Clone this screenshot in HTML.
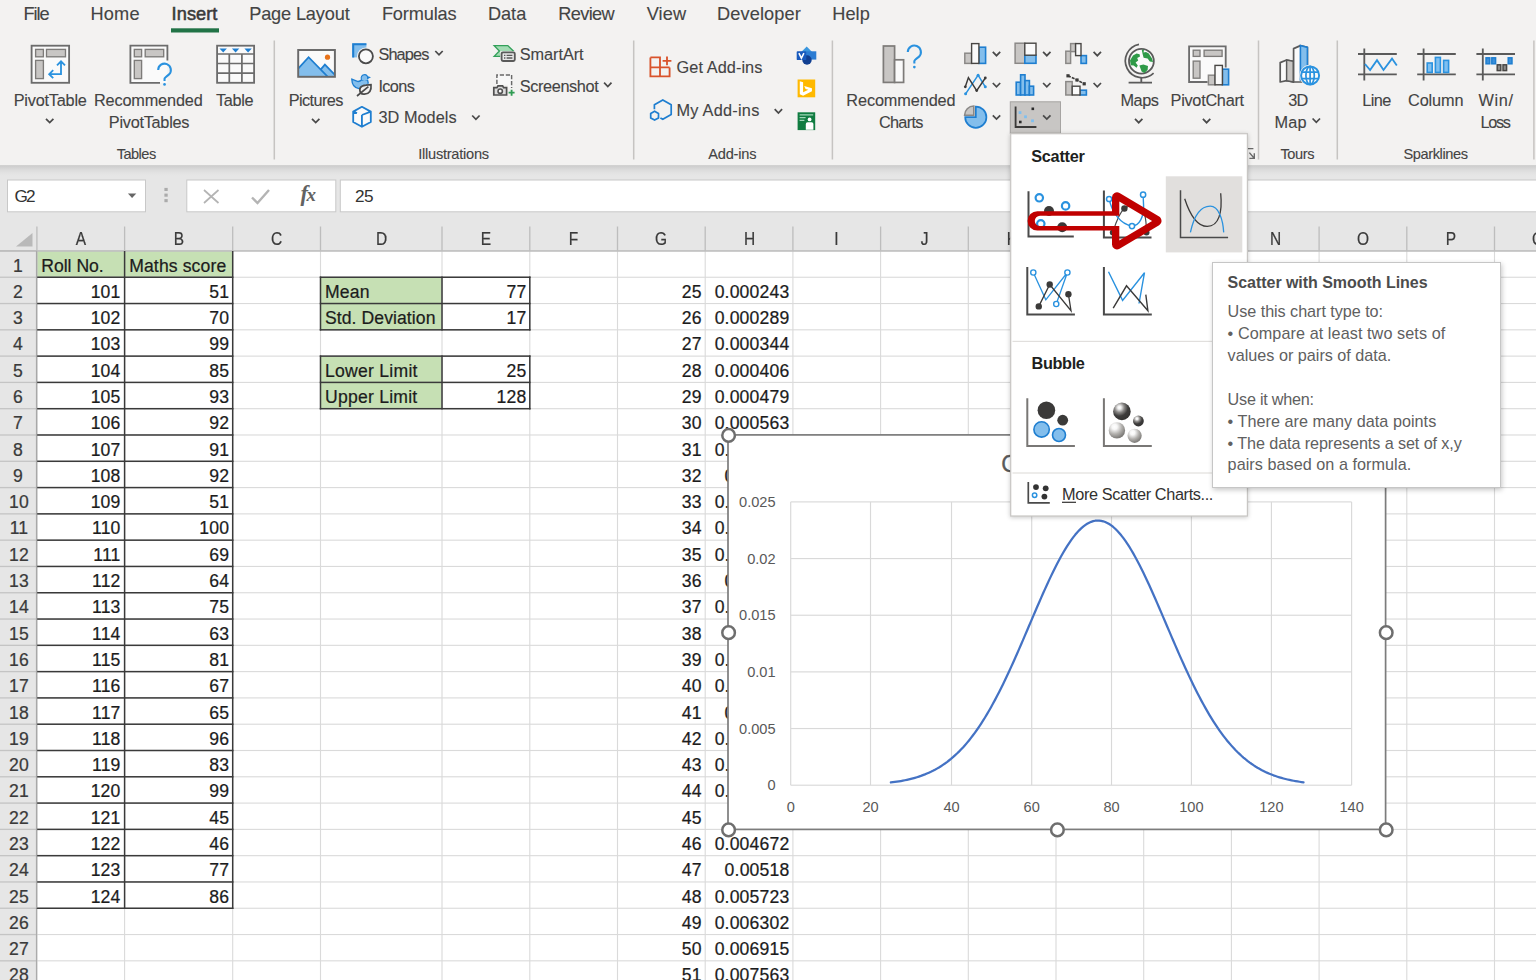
<!DOCTYPE html>
<html lang="en"><head><meta charset="utf-8"><title>Excel - Insert Scatter with Smooth Lines</title>
<style>
html,body{margin:0;padding:0;}
body{width:1536px;height:980px;overflow:hidden;position:relative;background:#e6e6e6;font-family:"Liberation Sans",sans-serif;}
#ribbon{position:absolute;left:0;top:0;width:1536px;height:165px;background:#f3f2f1;}
#rsh{position:absolute;left:0;top:165px;width:1536px;height:11px;background:linear-gradient(#d3d3d2 0%,#cfcfcf 12%,#d6d6d6 30%,#dddddd 50%,#e3e3e3 75%,#e6e6e6 100%);}
#fbar,#grid,#chart,#dd,#tip{position:absolute;left:0;top:0;width:1536px;height:980px;}
svg{position:absolute;left:0;top:0;display:block;}
.t{position:absolute;white-space:pre;line-height:1;}
#grid .t{-webkit-text-stroke:0.22px;}
#ribbon .t{-webkit-text-stroke:0.12px;}
.fx{font-family:"Liberation Serif",serif;font-style:italic;}
.tip{position:absolute;background:#fff;border:1px solid #c6c6c6;box-shadow:1px 2px 5px rgba(0,0,0,.22);box-sizing:border-box;}
#dd>svg{filter:drop-shadow(0.5px 1.5px 2px rgba(0,0,0,.22));}
</style></head>
<body>
<div id="ribbon">
<svg width="1536" height="170" viewBox="0 0 1536 170"><rect x="171" y="28.3" width="48" height="4.2" fill="#217346"/><rect x="273.55" y="40.5" width="1.5" height="119" fill="#c6c4c2"/><rect x="632.95" y="40.5" width="1.5" height="119" fill="#c6c4c2"/><rect x="831.65" y="40.5" width="1.5" height="119" fill="#c6c4c2"/><rect x="1257.75" y="40.5" width="1.5" height="119" fill="#c6c4c2"/><rect x="1336.55" y="40.5" width="1.5" height="119" fill="#c6c4c2"/><rect x="1533.15" y="40.5" width="1.5" height="119" fill="#c6c4c2"/><path d="M46 118.8 L49.7 122.6 L53.4 118.8" fill="none" stroke="#4a4a4a" stroke-width="1.75"/><path d="M312 118.8 L315.7 122.6 L319.4 118.8" fill="none" stroke="#4a4a4a" stroke-width="1.75"/><path d="M435.3 51 L439 54.8 L442.7 51" fill="none" stroke="#4a4a4a" stroke-width="1.75"/><path d="M472.2 115.5 L475.9 119.3 L479.6 115.5" fill="none" stroke="#4a4a4a" stroke-width="1.75"/><path d="M604.1 82.7 L607.8 86.5 L611.5 82.7" fill="none" stroke="#4a4a4a" stroke-width="1.75"/><path d="M774.7 109.2 L778.4 113 L782.1 109.2" fill="none" stroke="#4a4a4a" stroke-width="1.75"/><path d="M992.8 51.9 L996.5 55.7 L1000.2 51.9" fill="none" stroke="#4a4a4a" stroke-width="1.75"/><path d="M992.8 83 L996.5 86.8 L1000.2 83" fill="none" stroke="#4a4a4a" stroke-width="1.75"/><path d="M992.8 115.3 L996.5 119.1 L1000.2 115.3" fill="none" stroke="#4a4a4a" stroke-width="1.75"/><path d="M1043.1 51.9 L1046.8 55.7 L1050.5 51.9" fill="none" stroke="#4a4a4a" stroke-width="1.75"/><path d="M1043.1 83 L1046.8 86.8 L1050.5 83" fill="none" stroke="#4a4a4a" stroke-width="1.75"/><path d="M1093.6 51.9 L1097.3 55.7 L1101 51.9" fill="none" stroke="#4a4a4a" stroke-width="1.75"/><path d="M1093.6 83 L1097.3 86.8 L1101 83" fill="none" stroke="#4a4a4a" stroke-width="1.75"/><path d="M1135 118.9 L1138.7 122.7 L1142.4 118.9" fill="none" stroke="#4a4a4a" stroke-width="1.75"/><path d="M1202.9 118.9 L1206.6 122.7 L1210.3 118.9" fill="none" stroke="#4a4a4a" stroke-width="1.75"/><path d="M1312.6 118.5 L1316.3 122.3 L1320 118.5" fill="none" stroke="#4a4a4a" stroke-width="1.75"/><rect x="1010.3" y="101.8" width="50.2" height="31.5" fill="#c8c6c4" stroke="#a6a4a2" stroke-width="1"/><path d="M1043.1 115.3 L1046.8 119.1 L1050.5 115.3" fill="none" stroke="#4a4a4a" stroke-width="1.75"/><rect x="31.6" y="45.7" width="37.5" height="37.1" fill="#fafafa" stroke="#6c6c6c" stroke-width="1.83"/><rect x="35.6" y="49.4" width="7.8" height="7.4" fill="#c8c6c4" stroke="#7d7b79" stroke-width="1.34"/><rect x="46.5" y="49.4" width="19" height="7.4" fill="#c8c6c4" stroke="#7d7b79" stroke-width="1.34"/><rect x="35.6" y="60.4" width="7.8" height="18.2" fill="#c8c6c4" stroke="#7d7b79" stroke-width="1.34"/><path d="M61 61.6 L61 74.2 L49.2 74.2 M57 65.4 L61 61.4 L65 65.4 M53.2 70.2 L49.2 74.2 L53.2 78.2" fill="none" stroke="#2a92df" stroke-width="1.83"/><rect x="130.4" y="45.7" width="37" height="37.1" fill="#fafafa"/><path d="M160 82.8 L130.4 82.8 L130.4 45.7 L167.4 45.7 L167.4 60.5" fill="none" stroke="#6c6c6c" stroke-width="1.83"/><rect x="134.3" y="49.4" width="7.3" height="7.4" fill="#c8c6c4" stroke="#7d7b79" stroke-width="1.34"/><rect x="145.2" y="49.4" width="18.5" height="7.4" fill="#c8c6c4" stroke="#7d7b79" stroke-width="1.34"/><rect x="134.3" y="60.4" width="7.3" height="18.2" fill="#c8c6c4" stroke="#7d7b79" stroke-width="1.34"/><path d="M158.2 69.94 A6.33 6.33 0 1 1 169.08 74.37 Q164.53 77.85 164.53 78.67 L164.53 80.93" fill="none" stroke="#2a92df" stroke-width="2.07"/><circle cx="164.53" cy="84.43" r="1.33" fill="#2a92df"/><rect x="217.1" y="45.7" width="37" height="37.1" fill="#fafafa" stroke="#6c6c6c" stroke-width="1.83"/><path d="M217 54 L254 54 M217 63.5 L254 63.5 M217 73.2 L254 73.2 M229.3 54 L229.3 82.8 M241.9 54 L241.9 82.8" fill="none" stroke="#6c6c6c" stroke-width="1.71"/><path d="M219.5 48.5 L226.9 48.5 L223.2 52.4 Z" fill="#1e7ed0"/><path d="M231.9 48.5 L239.3 48.5 L235.6 52.4 Z" fill="#1e7ed0"/><path d="M244.4 48.5 L251.8 48.5 L248.1 52.4 Z" fill="#1e7ed0"/><rect x="298.2" y="50" width="36.7" height="26.8" fill="#fafafa"/><path d="M298.2 68.6 L308.6 57.2 L320.8 69.4 L324.9 64.6 L334.9 74.8 L334.9 76.8 L298.2 76.8 Z" fill="#83beec"/><path d="M298.2 68.6 L308.6 57.2 L327.6 76.6 M320.6 69.6 L324.9 64.6 L334.9 74.8" fill="none" stroke="#1e7ed0" stroke-width="1.71"/><rect x="298.2" y="50" width="36.7" height="26.8" fill="none" stroke="#696969" stroke-width="1.95"/><circle cx="327.5" cy="57.2" r="2.6" fill="#e8731a"/><rect x="352.4" y="43.4" width="14" height="14" fill="#83beec"/><path d="M353.2 57.4 L353.2 44.2 L366.4 44.2" fill="none" stroke="#1e7ed0" stroke-width="2.07"/><circle cx="365.9" cy="56.3" r="8.9" fill="#f3f2f1"/><circle cx="365.9" cy="56.3" r="7" fill="#fafafa" stroke="#4a4a4a" stroke-width="1.83"/><path d="M351.8 79.2 L357.4 81.4 Q359.8 81.8 361.6 79.8 L367.6 80.2 Q369.6 85.6 364.6 88.6 L359 88.6 Q352 87.6 351.8 79.2 Z" fill="#83beec" stroke="#1e7ed0" stroke-width="1.34"/><circle cx="364.6" cy="77.6" r="3.3" fill="#83beec"/><path d="M361.6 79.6 A3.3 3.3 0 1 1 367.6 79" fill="none" stroke="#1e7ed0" stroke-width="1.1"/><path d="M367.2 76 L371 77.3 L367.4 79.2 Z" fill="#1e7ed0"/><path d="M358.2 95.6 L369.8 85.2" fill="none" stroke="#f3f2f1" stroke-width="4.39"/><path d="M360.6 93.2 Q357.6 86 366 85.2 L371 84.6 Q372 93.4 364.4 94.2 Q362 94.4 360.6 93.2 Z" fill="#f3f2f1" stroke="#4a4a4a" stroke-width="1.71"/><path d="M357 96 L368.4 86.6" fill="none" stroke="#4a4a4a" stroke-width="1.71"/><path d="M361.9 106.8 L370.8 111.6 L370.8 122 L361.9 126.8 L353.2 122 L353.2 111.6 Z M353.2 111.6 L357 113.2 M361.9 115 L370.8 111.6 M361.9 115 L361.9 126.8" fill="#fafafa" stroke="#1e7ed0" stroke-width="1.83" stroke-linejoin="round"/><path d="M494.2 45.6 L507.8 45.6 L513.4 51 L507.8 56.4 L494.2 56.4 L499.4 51 Z" fill="#a3dcb4" stroke="#33a05a" stroke-width="1.34"/><rect x="500.2" y="51.2" width="16" height="10.8" fill="#f3f2f1"/><rect x="501.6" y="52.4" width="13.2" height="8.6" rx="1.4" fill="#e8e8e8" stroke="#5a5a5a" stroke-width="1.83"/><path d="M504 55.3 L505.4 55.3 M506.6 55.3 L512.4 55.3 M504 58 L505.4 58 M506.6 58 L512.4 58" fill="none" stroke="#5a5a5a" stroke-width="1.34"/><rect x="496.9" y="74.9" width="14.7" height="13.1" fill="#f8f8f8"/><path d="M496.9 84 L496.9 74.9 L511.6 74.9 L511.6 88" fill="none" stroke="#686868" stroke-width="1.46" stroke-dasharray="4.2 1.8"/><rect x="492.6" y="84.6" width="15.6" height="11.8" fill="#f3f2f1"/><path d="M493.8 87.6 L497 87.6 L498 85.9 L502.6 85.9 L503.6 87.6 L506.6 87.6 L506.6 95 L493.8 95 Z" fill="#dcdcdc" stroke="#505050" stroke-width="1.71"/><circle cx="500.2" cy="91.2" r="2.2" fill="#fafafa" stroke="#505050" stroke-width="1.59"/><path d="M508.6 92.7 L514.6 92.7 M511.6 89.7 L511.6 95.7" fill="none" stroke="#2f9c53" stroke-width="1.83"/><path d="M650.4 57.4 L660 57.4 L660 76.4 M650.4 67.4 L669.6 67.4 M650.4 57.4 L650.4 76.4 L669.6 76.4 L669.6 67.4" fill="none" stroke="#d9532c" stroke-width="1.83"/><path d="M662.6 60.8 L671.4 60.8 M667 56.4 L667 65.2" fill="none" stroke="#d9532c" stroke-width="1.83"/><path d="M654.4 109.2 L654.4 104.75 L662.8 99.9 L671.2 104.75 L671.2 114.45 L662.8 119.3 L660.4 117.9" fill="none" stroke="#1e7ed0" stroke-width="1.71" stroke-linejoin="round"/><path d="M654.6 111.2 L658.5 113.4 L658.5 117.9 L654.6 120.1 L650.7 117.9 L650.7 113.4 Z" fill="#f3f2f1" stroke="#1e7ed0" stroke-width="1.71" stroke-linejoin="round"/><path d="M806.7 46.6 L813.6 53.4 L806.7 60.2 L799.8 53.4 Z" fill="#3a96dd"/><rect x="806.2" y="51.3" width="10.1" height="8.3" fill="#2b7cd3"/><circle cx="807" cy="60" r="4.7" fill="#103f91"/><rect x="796.7" y="51.2" width="9.6" height="8.9" rx="0.9" fill="#185abd"/><path d="M798.9 53.2 L801.4 58.2 L803.9 53.2" fill="none" stroke="#fff" stroke-width="1.52"/><rect x="797.6" y="79.5" width="17.6" height="17.8" fill="#ffb900"/><g transform="translate(805.85 88.55) scale(1.38 1.2) translate(-806.8 -88.5)"><path d="M802.4 82.4 L804.8 83.2 L804.8 91.6 L808.6 89.6 L806.6 88.8 L805.6 86.4 L811.2 88.2 L811.2 90.8 L804.8 94.6 L802.4 93.2 Z" fill="#fff"/></g><rect x="797.6" y="112.3" width="17.6" height="17.8" fill="#107c41"/><path d="M799.6 114.8 L813.2 114.8 M799.6 117.6 L805.6 117.6 M799.6 120.4 L804.4 120.4" fill="none" stroke="#9fd5b7" stroke-width="1.34"/><circle cx="809.6" cy="119.4" r="1.9" fill="#fff"/><path d="M805.8 129.8 L805.8 124 Q805.8 122.2 807.6 122.2 L811.6 122.2 Q813.4 122.2 813.4 124 L813.4 129.8 Z" fill="#fff"/><rect x="883.4" y="46" width="11.2" height="36.4" fill="#c8c6c4" stroke="#7d7b79" stroke-width="1.71"/><rect x="894.6" y="59.8" width="9" height="22.6" fill="#fafafa" stroke="#7d7b79" stroke-width="1.71"/><path d="M907.8 52.08 A6.55 6.55 0 1 1 919.07 56.67 Q914.35 60.27 914.35 61.11 L914.35 63.45" fill="none" stroke="#2a92df" stroke-width="2.07"/><circle cx="914.35" cy="67.08" r="1.33" fill="#2a92df"/><rect x="964.8" y="53.2" width="6.8" height="10.2" fill="#c8c6c4" stroke="#8a8886" stroke-width="1.46"/><rect x="978.9" y="47.2" width="6.7" height="16.2" fill="#83beec" stroke="#1e7ed0" stroke-width="1.59"/><rect x="971.6" y="43.6" width="7.3" height="19.8" fill="#fafafa" stroke="#484644" stroke-width="1.4"/><path d="M965.6 93.8 L978.1 75.2 L985.3 86.8" fill="none" stroke="#2a92df" stroke-width="1.52"/><path d="M965.3 86.8 L968.4 77.6 L976.7 90.6 L985.3 78" fill="none" stroke="#3b3a39" stroke-width="1.46"/><circle cx="965.6" cy="93.8" r="1.5" fill="#2a92df"/><circle cx="978.1" cy="75.2" r="1.5" fill="#2a92df"/><circle cx="985.3" cy="86.8" r="1.5" fill="#2a92df"/><circle cx="965.3" cy="86.8" r="1.4" fill="#3b3a39"/><circle cx="976.7" cy="90.6" r="1.4" fill="#3b3a39"/><circle cx="985.3" cy="78" r="1.4" fill="#3b3a39"/><path d="M975.8 117.2 L975.8 106.6 A10.6 10.6 0 1 1 965.2 117.2 Z" fill="#83beec" stroke="#1e7ed0" stroke-width="1.71"/><path d="M973.8 115.2 L964.6 115.2 A9.2 9.2 0 0 1 973.8 106 Z" fill="#c8c6c4" stroke="#8a8886" stroke-width="1.59"/><rect x="1015.1" y="43.2" width="9.7" height="20.1" fill="#c8c6c4" stroke="#8a8886" stroke-width="1.46"/><rect x="1024.8" y="55.2" width="11.2" height="8.1" fill="#83beec" stroke="#1e7ed0" stroke-width="1.59"/><rect x="1024.8" y="43.2" width="11.2" height="12" fill="#fafafa" stroke="#484644" stroke-width="1.4"/><rect x="1016.2" y="82.2" width="4.4" height="12.8" fill="#83beec" stroke="#1e7ed0" stroke-width="1.59"/><rect x="1020.6" y="74.8" width="4.4" height="20.2" fill="#83beec" stroke="#1e7ed0" stroke-width="1.59"/><rect x="1025" y="80.6" width="4.4" height="14.4" fill="#83beec" stroke="#1e7ed0" stroke-width="1.59"/><rect x="1029.4" y="86.2" width="4.2" height="8.8" fill="#83beec" stroke="#1e7ed0" stroke-width="1.59"/><rect x="1065.8" y="51.2" width="4.8" height="12.2" fill="#c8c6c4" stroke="#8a8886" stroke-width="1.46"/><rect x="1070.6" y="43.6" width="5" height="8" fill="#c8c6c4" stroke="#8a8886" stroke-width="1.46"/><rect x="1081" y="55.6" width="5.4" height="7.8" fill="#83beec" stroke="#1e7ed0" stroke-width="1.59"/><rect x="1075.6" y="43.6" width="5.4" height="12" fill="#fafafa" stroke="#484644" stroke-width="1.4"/><rect x="1065.8" y="81.6" width="6.4" height="13.4" fill="#c8c6c4" stroke="#8a8886" stroke-width="1.46"/><rect x="1080" y="90.2" width="6.4" height="4.8" fill="#83beec" stroke="#1e7ed0" stroke-width="1.59"/><rect x="1072.2" y="86.2" width="7.8" height="8.8" fill="#fafafa" stroke="#484644" stroke-width="1.4"/><path d="M1068 75.8 L1077 80 L1084.2 83.8" fill="none" stroke="#3b3a39" stroke-width="1.59" stroke-dasharray="3 1.2"/><rect x="1066.4" y="74.2" width="3.2" height="3.2" fill="#3b3a39"/><rect x="1075.4" y="78.4" width="3.2" height="3.2" fill="#3b3a39"/><rect x="1082.6" y="82.2" width="3.2" height="3.2" fill="#3b3a39"/><path d="M1015.6 106.4 L1015.6 127 L1036.4 127" fill="none" stroke="#3b3a39" stroke-width="1.83"/><rect x="1031.5" y="107.5" width="2.6" height="2.6" fill="#2b2b2b"/><rect x="1019" y="120.7" width="2.6" height="2.6" fill="#2b2b2b"/><rect x="1018.6" y="111.2" width="2.8" height="2.8" fill="#7fbff0"/><rect x="1024.1" y="115.4" width="2.8" height="2.8" fill="#7fbff0"/><rect x="1031.1" y="119.4" width="2.8" height="2.8" fill="#7fbff0"/><path d="M1139 44.4 A16.8 16.8 0 1 0 1153.6 73.2" fill="none" stroke="#5a5a5a" stroke-width="1.71"/><circle cx="1141.4" cy="61.2" r="12.4" fill="#fafafa" stroke="#5a5a5a" stroke-width="1.83"/><path d="M1133 55.6 L1136.6 53.6 L1139.6 54.2 L1140 56.6 L1137.2 58 L1138.2 60.6 L1135.6 62.4 L1137.8 65.4 L1136.6 67.8 L1133.6 65.6 L1130.8 65.2 L1130 60.4 Z" fill="#2f9a48"/><path d="M1141.8 50 L1144 49.4 L1143.6 52.6 L1146 52 L1148.8 53.4 L1152 58.4 L1153 62 L1149.8 61.4 L1147.6 58.4 L1143.6 57.8 L1142.6 54 Z" fill="#2f9a48"/><path d="M1139.4 65.6 L1143.4 64.6 L1148 66 L1147.6 70 L1144.4 73 L1141.6 71.4 Z" fill="#2f9a48"/><path d="M1141.3 77.6 L1141.3 82.4 M1128.6 82.6 L1152 82.6" fill="none" stroke="#5a5a5a" stroke-width="1.83"/><rect x="1189.1" y="46.4" width="36.6" height="35.6" fill="#fafafa"/><path d="M1207.6 82 L1189.1 82 L1189.1 46.4 L1225.7 46.4 L1225.7 67.4" fill="none" stroke="#6c6c6c" stroke-width="1.83"/><rect x="1193.2" y="50.2" width="6.8" height="6.2" fill="#c8c6c4" stroke="#7d7b79" stroke-width="1.34"/><rect x="1204.1" y="50.2" width="18" height="6.2" fill="#c8c6c4" stroke="#7d7b79" stroke-width="1.34"/><rect x="1193.2" y="61.1" width="6.8" height="17.1" fill="#c8c6c4" stroke="#7d7b79" stroke-width="1.34"/><rect x="1208.4" y="75.2" width="6.6" height="9.6" fill="#c8c6c4" stroke="#8a8886" stroke-width="1.46"/><rect x="1222.4" y="69.2" width="6.2" height="15.6" fill="#83beec" stroke="#1e7ed0" stroke-width="1.59"/><rect x="1215" y="65.4" width="7.4" height="19.4" fill="#fafafa" stroke="#484644" stroke-width="1.4"/><path d="M1280.2 62.6 L1286.6 60 L1293.4 61.4 L1293.4 82 L1286.6 80.6 L1280.2 82 Z" fill="#fafafa" stroke="#5a5a5a" stroke-width="1.71" stroke-linejoin="round"/><path d="M1286.6 60 L1293.4 61.4 L1293.4 82 L1286.6 80.6 Z" fill="#c8c6c4" stroke="#5a5a5a" stroke-width="1.46"/><path d="M1293.6 48.6 L1300.4 45.6 L1307.4 47.4 L1307.4 82 L1293.6 82 Z" fill="#fafafa" stroke="#5a5a5a" stroke-width="1.71" stroke-linejoin="round"/><path d="M1300.4 45.6 L1307.4 47.4 L1307.4 80 L1300.4 80 Z" fill="#83beec" stroke="#1e7ed0" stroke-width="1.59"/><circle cx="1310.1" cy="75.4" r="10.6" fill="#f3f2f1"/><circle cx="1310.1" cy="75.4" r="9" fill="#fafafa" stroke="#2a92df" stroke-width="1.95"/><ellipse cx="1310.1" cy="75.4" rx="4.2" ry="9" fill="none" stroke="#2a92df" stroke-width="1.71"/><path d="M1310.1 66.4 L1310.1 84.4 M1301.6 72.2 L1318.6 72.2 M1301.6 78.6 L1318.6 78.6" fill="none" stroke="#2a92df" stroke-width="1.71"/><path d="M1364.3 48.4 L1364.3 80.5 M1358 54 L1396.8 54 M1358 74.4 L1396.8 74.4" fill="none" stroke="#5a5a5a" stroke-width="1.83"/><path d="M1365 64 L1370.1 70 L1377 60.2 L1383.5 70 L1392 58.6 L1396.8 65.6" fill="none" stroke="#2a92df" stroke-width="1.83"/><path d="M1423.6 48.4 L1423.6 80.5 M1417.2 54 L1455.8 54 M1417.2 74.4 L1455.8 74.4" fill="none" stroke="#5a5a5a" stroke-width="1.83"/><rect x="1427.2" y="63" width="5" height="9.4" fill="#7fbff0" stroke="#2a92df" stroke-width="1.59"/><rect x="1435.4" y="57.4" width="5" height="15" fill="#7fbff0" stroke="#2a92df" stroke-width="1.59"/><rect x="1443.6" y="60.4" width="5" height="12" fill="#7fbff0" stroke="#2a92df" stroke-width="1.59"/><path d="M1482.8 48.4 L1482.8 80.5 M1476.4 54 L1515 54 M1476.4 74.4 L1515 74.4" fill="none" stroke="#5a5a5a" stroke-width="1.83"/><rect x="1486" y="57.8" width="3.8" height="6" fill="#3b8fd9" stroke="#1e7ed0" stroke-width="1.46"/><rect x="1491.8" y="57.8" width="3.8" height="6" fill="#3b8fd9" stroke="#1e7ed0" stroke-width="1.46"/><rect x="1508.2" y="57.8" width="3.8" height="6" fill="#3b8fd9" stroke="#1e7ed0" stroke-width="1.46"/><rect x="1497.2" y="64.8" width="3.6" height="5.8" fill="#8a8886" stroke="#484644" stroke-width="1.46"/><rect x="1503" y="64.8" width="3.6" height="5.8" fill="#8a8886" stroke="#484644" stroke-width="1.46"/><path d="M1247.6 148.6 L1253.4 148.6 M1249.4 152.6 L1254 158 M1254.3 153.2 L1254.3 158.4 L1249.4 158.4" fill="none" stroke="#6a6a6a" stroke-width="1.4"/></svg>
<span class="t" style="left:23.4px;top:5px;font-size:18.2px;letter-spacing:-1.01px;color:#444444;">File</span><span class="t" style="left:90.4px;top:5px;font-size:18.2px;letter-spacing:0.22px;color:#444444;">Home</span><span class="t" style="left:249.2px;top:5px;font-size:18.2px;letter-spacing:-0.16px;color:#444444;">Page Layout</span><span class="t" style="left:381.9px;top:5px;font-size:18.2px;letter-spacing:-0.15px;color:#444444;">Formulas</span><span class="t" style="left:487.9px;top:5px;font-size:18.2px;letter-spacing:-0.01px;color:#444444;">Data</span><span class="t" style="left:558.3px;top:5px;font-size:18.2px;letter-spacing:-0.67px;color:#444444;">Review</span><span class="t" style="left:646.7px;top:5px;font-size:18.2px;letter-spacing:0.13px;color:#444444;">View</span><span class="t" style="left:717px;top:5px;font-size:18.2px;letter-spacing:0.12px;color:#444444;">Developer</span><span class="t" style="left:832.3px;top:5px;font-size:18.2px;letter-spacing:0.02px;color:#444444;">Help</span><span class="t" style="left:171.6px;top:5px;font-size:18.2px;letter-spacing:0.06px;color:#3a3a3a;-webkit-text-stroke:0.55px #3a3a3a;">Insert</span><span class="t" style="left:13.7px;top:92px;font-size:16.3px;letter-spacing:-0.21px;color:#444444;">PivotTable</span><span class="t" style="left:93.9px;top:92px;font-size:16.3px;letter-spacing:-0.15px;color:#444444;">Recommended</span><span class="t" style="left:108.8px;top:114px;font-size:16.3px;letter-spacing:-0.26px;color:#444444;">PivotTables</span><span class="t" style="left:216px;top:92px;font-size:16.3px;letter-spacing:-0.32px;color:#444444;">Table</span><span class="t" style="left:288.8px;top:92px;font-size:16.3px;letter-spacing:-0.6px;color:#444444;">Pictures</span><span class="t" style="left:378.4px;top:46px;font-size:16.3px;letter-spacing:-0.84px;color:#444444;">Shapes</span><span class="t" style="left:378.4px;top:78px;font-size:16.3px;letter-spacing:-0.59px;color:#444444;">Icons</span><span class="t" style="left:378.4px;top:109px;font-size:16.3px;letter-spacing:0.05px;color:#444444;">3D Models</span><span class="t" style="left:519.8px;top:46px;font-size:16.3px;letter-spacing:-0.06px;color:#444444;">SmartArt</span><span class="t" style="left:519.8px;top:78px;font-size:16.3px;letter-spacing:-0.38px;color:#444444;">Screenshot</span><span class="t" style="left:676.5px;top:59px;font-size:16.3px;letter-spacing:0.08px;color:#444444;">Get Add-ins</span><span class="t" style="left:676.5px;top:102px;font-size:16.3px;letter-spacing:0.25px;color:#444444;">My Add-ins</span><span class="t" style="left:846.3px;top:92px;font-size:16.3px;letter-spacing:-0.11px;color:#444444;">Recommended</span><span class="t" style="left:878.9px;top:114px;font-size:16.3px;letter-spacing:-0.7px;color:#444444;">Charts</span><span class="t" style="left:1120.5px;top:92px;font-size:16.3px;letter-spacing:-0.49px;color:#444444;">Maps</span><span class="t" style="left:1170.6px;top:92px;font-size:16.3px;letter-spacing:-0.28px;color:#444444;">PivotChart</span><span class="t" style="left:1288.3px;top:92px;font-size:16.3px;letter-spacing:-0.94px;color:#444444;">3D</span><span class="t" style="left:1274.6px;top:114px;font-size:16.3px;letter-spacing:0.15px;color:#444444;">Map</span><span class="t" style="left:1362.3px;top:92px;font-size:16.3px;letter-spacing:-0.57px;color:#444444;">Line</span><span class="t" style="left:1408px;top:92px;font-size:16.3px;letter-spacing:-0.13px;color:#444444;">Column</span><span class="t" style="left:1478.5px;top:92px;font-size:16.3px;letter-spacing:0.63px;color:#444444;">Win/</span><span class="t" style="left:1480.5px;top:114px;font-size:16.3px;letter-spacing:-1.31px;color:#444444;">Loss</span><span class="t" style="left:116.7px;top:147px;font-size:14.6px;letter-spacing:-0.54px;color:#444444;">Tables</span><span class="t" style="left:418.2px;top:147px;font-size:14.6px;letter-spacing:-0.24px;color:#444444;">Illustrations</span><span class="t" style="left:708.3px;top:147px;font-size:14.6px;letter-spacing:-0.22px;color:#444444;">Add-ins</span><span class="t" style="left:1280.5px;top:147px;font-size:14.6px;letter-spacing:-0.43px;color:#444444;">Tours</span><span class="t" style="left:1403.5px;top:147px;font-size:14.6px;letter-spacing:-0.41px;color:#444444;">Sparklines</span>
</div>
<div id="rsh"></div>
<div id="fbar"><svg width="1536" height="60" viewBox="0 166 1536 60" style="top:166px"><rect x="7.5" y="180" width="138" height="31.8" fill="#fff" stroke="#c8c8c8" stroke-width="1"/><rect x="186.8" y="180" width="149" height="31.8" fill="#fff" stroke="#c8c8c8" stroke-width="1"/><rect x="340.3" y="180" width="1210" height="31.8" fill="#fff" stroke="#c8c8c8" stroke-width="1"/><path d="M127.9 193.4 L136.3 193.4 L132.1 197.9 Z" fill="#666"/><rect x="164.4" y="187.9" width="3.3" height="3.1" fill="#ababab"/><rect x="164.4" y="193.6" width="3.3" height="3.1" fill="#ababab"/><rect x="164.4" y="199.1" width="3.3" height="3.1" fill="#ababab"/><path d="M204 190 L218.5 203 M218.5 190 L204 203" stroke="#b4b4b4" stroke-width="1.7" fill="none"/><path d="M252 197.5 L257.5 203 L269 190" stroke="#b4b4b4" stroke-width="2.4" fill="none"/></svg>
<span class="t" style="left:14.5px;top:188px;font-size:17.2px;letter-spacing:-1.94px;color:#333;">G2</span>
<span class="t" style="left:355px;top:188px;font-size:17.2px;letter-spacing:-0.53px;color:#333;">25</span>
<span class="t fx" style="left:300.6px;top:183.3px;font-size:22.5px;font-weight:bold;color:#626262">f<span style="font-size:19px;margin-left:-1.6px">x</span></span>
</div>
<div id="grid"><svg width="1536" height="980" viewBox="0 0 1536 980"><rect x="0" y="225.5" width="1536" height="25.44999999999999" fill="#e6e6e6"/><rect x="0" y="250.95" width="36.9" height="740" fill="#e6e6e6"/><rect x="36.9" y="250.95" width="1500" height="740" fill="#fff"/><rect x="36.9" y="250.95" width="195.8" height="26.29" fill="#c6e0b4"/><rect x="320.5" y="277.24" width="121.5" height="52.58" fill="#c6e0b4"/><rect x="320.5" y="356.12" width="121.5" height="52.58" fill="#c6e0b4"/><rect x="36.35" y="250.95" width="1.1" height="740" fill="#dadada"/><rect x="36.25" y="226.5" width="1.3" height="24.45" fill="#bdbdbd"/><rect x="124.05" y="250.95" width="1.1" height="740" fill="#dadada"/><rect x="123.95" y="226.5" width="1.3" height="24.45" fill="#bdbdbd"/><rect x="232.15" y="250.95" width="1.1" height="740" fill="#dadada"/><rect x="232.05" y="226.5" width="1.3" height="24.45" fill="#bdbdbd"/><rect x="319.95" y="250.95" width="1.1" height="740" fill="#dadada"/><rect x="319.85" y="226.5" width="1.3" height="24.45" fill="#bdbdbd"/><rect x="441.45" y="250.95" width="1.1" height="740" fill="#dadada"/><rect x="441.35" y="226.5" width="1.3" height="24.45" fill="#bdbdbd"/><rect x="529.25" y="250.95" width="1.1" height="740" fill="#dadada"/><rect x="529.15" y="226.5" width="1.3" height="24.45" fill="#bdbdbd"/><rect x="616.95" y="250.95" width="1.1" height="740" fill="#dadada"/><rect x="616.85" y="226.5" width="1.3" height="24.45" fill="#bdbdbd"/><rect x="704.65" y="250.95" width="1.1" height="740" fill="#dadada"/><rect x="704.55" y="226.5" width="1.3" height="24.45" fill="#bdbdbd"/><rect x="792.35" y="250.95" width="1.1" height="740" fill="#dadada"/><rect x="792.25" y="226.5" width="1.3" height="24.45" fill="#bdbdbd"/><rect x="880.05" y="250.95" width="1.1" height="740" fill="#dadada"/><rect x="879.95" y="226.5" width="1.3" height="24.45" fill="#bdbdbd"/><rect x="967.75" y="250.95" width="1.1" height="740" fill="#dadada"/><rect x="967.65" y="226.5" width="1.3" height="24.45" fill="#bdbdbd"/><rect x="1055.45" y="250.95" width="1.1" height="740" fill="#dadada"/><rect x="1055.35" y="226.5" width="1.3" height="24.45" fill="#bdbdbd"/><rect x="1143.15" y="250.95" width="1.1" height="740" fill="#dadada"/><rect x="1143.05" y="226.5" width="1.3" height="24.45" fill="#bdbdbd"/><rect x="1230.85" y="250.95" width="1.1" height="740" fill="#dadada"/><rect x="1230.75" y="226.5" width="1.3" height="24.45" fill="#bdbdbd"/><rect x="1318.55" y="250.95" width="1.1" height="740" fill="#dadada"/><rect x="1318.45" y="226.5" width="1.3" height="24.45" fill="#bdbdbd"/><rect x="1406.25" y="250.95" width="1.1" height="740" fill="#dadada"/><rect x="1406.15" y="226.5" width="1.3" height="24.45" fill="#bdbdbd"/><rect x="1493.95" y="250.95" width="1.1" height="740" fill="#dadada"/><rect x="1493.85" y="226.5" width="1.3" height="24.45" fill="#bdbdbd"/><rect x="1581.65" y="250.95" width="1.1" height="740" fill="#dadada"/><rect x="1581.55" y="226.5" width="1.3" height="24.45" fill="#bdbdbd"/><rect x="36.9" y="250.4" width="1500" height="1.1" fill="#dadada"/><rect x="0" y="250.3" width="36.9" height="1.3" fill="#c4c4c4"/><rect x="36.9" y="276.69" width="1500" height="1.1" fill="#dadada"/><rect x="0" y="276.59" width="36.9" height="1.3" fill="#c4c4c4"/><rect x="36.9" y="302.98" width="1500" height="1.1" fill="#dadada"/><rect x="0" y="302.88" width="36.9" height="1.3" fill="#c4c4c4"/><rect x="36.9" y="329.28" width="1500" height="1.1" fill="#dadada"/><rect x="0" y="329.18" width="36.9" height="1.3" fill="#c4c4c4"/><rect x="36.9" y="355.57" width="1500" height="1.1" fill="#dadada"/><rect x="0" y="355.47" width="36.9" height="1.3" fill="#c4c4c4"/><rect x="36.9" y="381.86" width="1500" height="1.1" fill="#dadada"/><rect x="0" y="381.76" width="36.9" height="1.3" fill="#c4c4c4"/><rect x="36.9" y="408.15" width="1500" height="1.1" fill="#dadada"/><rect x="0" y="408.05" width="36.9" height="1.3" fill="#c4c4c4"/><rect x="36.9" y="434.44" width="1500" height="1.1" fill="#dadada"/><rect x="0" y="434.34" width="36.9" height="1.3" fill="#c4c4c4"/><rect x="36.9" y="460.74" width="1500" height="1.1" fill="#dadada"/><rect x="0" y="460.64" width="36.9" height="1.3" fill="#c4c4c4"/><rect x="36.9" y="487.03" width="1500" height="1.1" fill="#dadada"/><rect x="0" y="486.93" width="36.9" height="1.3" fill="#c4c4c4"/><rect x="36.9" y="513.32" width="1500" height="1.1" fill="#dadada"/><rect x="0" y="513.22" width="36.9" height="1.3" fill="#c4c4c4"/><rect x="36.9" y="539.61" width="1500" height="1.1" fill="#dadada"/><rect x="0" y="539.51" width="36.9" height="1.3" fill="#c4c4c4"/><rect x="36.9" y="565.9" width="1500" height="1.1" fill="#dadada"/><rect x="0" y="565.8" width="36.9" height="1.3" fill="#c4c4c4"/><rect x="36.9" y="592.2" width="1500" height="1.1" fill="#dadada"/><rect x="0" y="592.1" width="36.9" height="1.3" fill="#c4c4c4"/><rect x="36.9" y="618.49" width="1500" height="1.1" fill="#dadada"/><rect x="0" y="618.39" width="36.9" height="1.3" fill="#c4c4c4"/><rect x="36.9" y="644.78" width="1500" height="1.1" fill="#dadada"/><rect x="0" y="644.68" width="36.9" height="1.3" fill="#c4c4c4"/><rect x="36.9" y="671.07" width="1500" height="1.1" fill="#dadada"/><rect x="0" y="670.97" width="36.9" height="1.3" fill="#c4c4c4"/><rect x="36.9" y="697.36" width="1500" height="1.1" fill="#dadada"/><rect x="0" y="697.26" width="36.9" height="1.3" fill="#c4c4c4"/><rect x="36.9" y="723.66" width="1500" height="1.1" fill="#dadada"/><rect x="0" y="723.56" width="36.9" height="1.3" fill="#c4c4c4"/><rect x="36.9" y="749.95" width="1500" height="1.1" fill="#dadada"/><rect x="0" y="749.85" width="36.9" height="1.3" fill="#c4c4c4"/><rect x="36.9" y="776.24" width="1500" height="1.1" fill="#dadada"/><rect x="0" y="776.14" width="36.9" height="1.3" fill="#c4c4c4"/><rect x="36.9" y="802.53" width="1500" height="1.1" fill="#dadada"/><rect x="0" y="802.43" width="36.9" height="1.3" fill="#c4c4c4"/><rect x="36.9" y="828.82" width="1500" height="1.1" fill="#dadada"/><rect x="0" y="828.72" width="36.9" height="1.3" fill="#c4c4c4"/><rect x="36.9" y="855.12" width="1500" height="1.1" fill="#dadada"/><rect x="0" y="855.02" width="36.9" height="1.3" fill="#c4c4c4"/><rect x="36.9" y="881.41" width="1500" height="1.1" fill="#dadada"/><rect x="0" y="881.31" width="36.9" height="1.3" fill="#c4c4c4"/><rect x="36.9" y="907.7" width="1500" height="1.1" fill="#dadada"/><rect x="0" y="907.6" width="36.9" height="1.3" fill="#c4c4c4"/><rect x="36.9" y="933.99" width="1500" height="1.1" fill="#dadada"/><rect x="0" y="933.89" width="36.9" height="1.3" fill="#c4c4c4"/><rect x="36.9" y="960.28" width="1500" height="1.1" fill="#dadada"/><rect x="0" y="960.18" width="36.9" height="1.3" fill="#c4c4c4"/><rect x="36.9" y="986.58" width="1500" height="1.1" fill="#dadada"/><rect x="0" y="986.48" width="36.9" height="1.3" fill="#c4c4c4"/><rect x="0" y="250.3" width="1536" height="1.3" fill="#b8b8b8"/><rect x="35.9" y="250.95" width="1.3" height="740" fill="#ababab"/><path d="M32.5 233 L32.5 246.5 L16 246.5 Z" fill="#b9b9b9"/><rect x="36.65" y="276.49" width="196.8" height="1.5" fill="#3a3a3a"/><rect x="36.65" y="302.78" width="196.8" height="1.5" fill="#3a3a3a"/><rect x="36.65" y="329.08" width="196.8" height="1.5" fill="#3a3a3a"/><rect x="36.65" y="355.37" width="196.8" height="1.5" fill="#3a3a3a"/><rect x="36.65" y="381.66" width="196.8" height="1.5" fill="#3a3a3a"/><rect x="36.65" y="407.95" width="196.8" height="1.5" fill="#3a3a3a"/><rect x="36.65" y="434.24" width="196.8" height="1.5" fill="#3a3a3a"/><rect x="36.65" y="460.54" width="196.8" height="1.5" fill="#3a3a3a"/><rect x="36.65" y="486.83" width="196.8" height="1.5" fill="#3a3a3a"/><rect x="36.65" y="513.12" width="196.8" height="1.5" fill="#3a3a3a"/><rect x="36.65" y="539.41" width="196.8" height="1.5" fill="#3a3a3a"/><rect x="36.65" y="565.7" width="196.8" height="1.5" fill="#3a3a3a"/><rect x="36.65" y="592" width="196.8" height="1.5" fill="#3a3a3a"/><rect x="36.65" y="618.29" width="196.8" height="1.5" fill="#3a3a3a"/><rect x="36.65" y="644.58" width="196.8" height="1.5" fill="#3a3a3a"/><rect x="36.65" y="670.87" width="196.8" height="1.5" fill="#3a3a3a"/><rect x="36.65" y="697.16" width="196.8" height="1.5" fill="#3a3a3a"/><rect x="36.65" y="723.46" width="196.8" height="1.5" fill="#3a3a3a"/><rect x="36.65" y="749.75" width="196.8" height="1.5" fill="#3a3a3a"/><rect x="36.65" y="776.04" width="196.8" height="1.5" fill="#3a3a3a"/><rect x="36.65" y="802.33" width="196.8" height="1.5" fill="#3a3a3a"/><rect x="36.65" y="828.62" width="196.8" height="1.5" fill="#3a3a3a"/><rect x="36.65" y="854.92" width="196.8" height="1.5" fill="#3a3a3a"/><rect x="36.65" y="881.21" width="196.8" height="1.5" fill="#3a3a3a"/><rect x="36.65" y="907.5" width="196.8" height="1.5" fill="#3a3a3a"/><rect x="123.85" y="251" width="1.5" height="658" fill="#3a3a3a"/><rect x="231.95" y="251" width="1.5" height="658" fill="#3a3a3a"/><rect x="36.1" y="251.75" width="1.1" height="656.5" fill="#a8a8a8"/><rect x="319.75" y="276.49" width="210.8" height="1.5" fill="#3a3a3a"/><rect x="319.75" y="302.78" width="210.8" height="1.5" fill="#3a3a3a"/><rect x="319.75" y="329.08" width="210.8" height="1.5" fill="#3a3a3a"/><rect x="319.75" y="276.49" width="1.5" height="54.08" fill="#3a3a3a"/><rect x="441.25" y="276.49" width="1.5" height="54.08" fill="#3a3a3a"/><rect x="529.05" y="276.49" width="1.5" height="54.08" fill="#3a3a3a"/><rect x="319.75" y="355.37" width="210.8" height="1.5" fill="#3a3a3a"/><rect x="319.75" y="381.66" width="210.8" height="1.5" fill="#3a3a3a"/><rect x="319.75" y="407.95" width="210.8" height="1.5" fill="#3a3a3a"/><rect x="319.75" y="355.37" width="1.5" height="54.08" fill="#3a3a3a"/><rect x="441.25" y="355.37" width="1.5" height="54.08" fill="#3a3a3a"/><rect x="529.05" y="355.37" width="1.5" height="54.08" fill="#3a3a3a"/></svg>
<span class="t" style="left:74.75px;top:230px;font-size:18px;color:#3a3a3a;transform:scaleX(.86);">A</span><span class="t" style="left:172.65px;top:230px;font-size:18px;color:#3a3a3a;transform:scaleX(.86);">B</span><span class="t" style="left:270.1px;top:230px;font-size:18px;color:#3a3a3a;transform:scaleX(.86);">C</span><span class="t" style="left:374.75px;top:230px;font-size:18px;color:#3a3a3a;transform:scaleX(.86);">D</span><span class="t" style="left:479.9px;top:230px;font-size:18px;color:#3a3a3a;transform:scaleX(.86);">E</span><span class="t" style="left:568.15px;top:230px;font-size:18px;color:#3a3a3a;transform:scaleX(.86);">F</span><span class="t" style="left:654.35px;top:230px;font-size:18px;color:#3a3a3a;transform:scaleX(.86);">G</span><span class="t" style="left:742.55px;top:230px;font-size:18px;color:#3a3a3a;transform:scaleX(.86);">H</span><span class="t" style="left:834.25px;top:230px;font-size:18px;color:#3a3a3a;transform:scaleX(.86);">I</span><span class="t" style="left:919.95px;top:230px;font-size:18px;color:#3a3a3a;transform:scaleX(.86);">J</span><span class="t" style="left:1006.15px;top:230px;font-size:18px;color:#3a3a3a;transform:scaleX(.86);">K</span><span class="t" style="left:1094.84px;top:230px;font-size:18px;color:#3a3a3a;transform:scaleX(.86);">L</span><span class="t" style="left:1180.05px;top:230px;font-size:18px;color:#3a3a3a;transform:scaleX(.86);">M</span><span class="t" style="left:1268.75px;top:230px;font-size:18px;color:#3a3a3a;transform:scaleX(.86);">N</span><span class="t" style="left:1355.95px;top:230px;font-size:18px;color:#3a3a3a;transform:scaleX(.86);">O</span><span class="t" style="left:1444.65px;top:230px;font-size:18px;color:#3a3a3a;transform:scaleX(.86);">P</span><span class="t" style="left:1531.35px;top:230px;font-size:18px;color:#3a3a3a;transform:scaleX(.86);">Q</span><span class="t" style="left:13.01px;top:258px;font-size:17.6px;color:#3a3a3a;">1</span><span class="t" style="left:13.01px;top:284px;font-size:17.6px;color:#3a3a3a;">2</span><span class="t" style="left:13.01px;top:310px;font-size:17.6px;color:#3a3a3a;">3</span><span class="t" style="left:13.01px;top:336px;font-size:17.6px;color:#3a3a3a;">4</span><span class="t" style="left:13.01px;top:363px;font-size:17.6px;color:#3a3a3a;">5</span><span class="t" style="left:13.01px;top:389px;font-size:17.6px;color:#3a3a3a;">6</span><span class="t" style="left:13.01px;top:415px;font-size:17.6px;color:#3a3a3a;">7</span><span class="t" style="left:13.01px;top:442px;font-size:17.6px;color:#3a3a3a;">8</span><span class="t" style="left:13.01px;top:468px;font-size:17.6px;color:#3a3a3a;">9</span><span class="t" style="left:9.11px;top:494px;font-size:17.6px;color:#3a3a3a;">10</span><span class="t" style="left:9.76px;top:520px;font-size:17.6px;color:#3a3a3a;">11</span><span class="t" style="left:9.11px;top:547px;font-size:17.6px;color:#3a3a3a;">12</span><span class="t" style="left:9.11px;top:573px;font-size:17.6px;color:#3a3a3a;">13</span><span class="t" style="left:9.11px;top:599px;font-size:17.6px;color:#3a3a3a;">14</span><span class="t" style="left:9.11px;top:626px;font-size:17.6px;color:#3a3a3a;">15</span><span class="t" style="left:9.11px;top:652px;font-size:17.6px;color:#3a3a3a;">16</span><span class="t" style="left:9.11px;top:678px;font-size:17.6px;color:#3a3a3a;">17</span><span class="t" style="left:9.11px;top:705px;font-size:17.6px;color:#3a3a3a;">18</span><span class="t" style="left:9.11px;top:731px;font-size:17.6px;color:#3a3a3a;">19</span><span class="t" style="left:9.11px;top:757px;font-size:17.6px;color:#3a3a3a;">20</span><span class="t" style="left:9.11px;top:783px;font-size:17.6px;color:#3a3a3a;">21</span><span class="t" style="left:9.11px;top:810px;font-size:17.6px;color:#3a3a3a;">22</span><span class="t" style="left:9.11px;top:836px;font-size:17.6px;color:#3a3a3a;">23</span><span class="t" style="left:9.11px;top:862px;font-size:17.6px;color:#3a3a3a;">24</span><span class="t" style="left:9.11px;top:889px;font-size:17.6px;color:#3a3a3a;">25</span><span class="t" style="left:9.11px;top:915px;font-size:17.6px;color:#3a3a3a;">26</span><span class="t" style="left:9.11px;top:941px;font-size:17.6px;color:#3a3a3a;">27</span><span class="t" style="left:9.11px;top:967px;font-size:17.6px;color:#3a3a3a;">28</span><span class="t" style="left:41.2px;top:258px;font-size:17.6px;letter-spacing:0px;color:#1c1c1c;">Roll No.</span><span class="t" style="left:129.2px;top:258px;font-size:17.6px;letter-spacing:0.12px;color:#1c1c1c;">Maths score</span><span class="t" style="left:90.67px;top:284px;font-size:17.6px;letter-spacing:0.18px;color:#1c1c1c;">101</span><span class="t" style="left:209.24px;top:284px;font-size:17.6px;letter-spacing:0.18px;color:#1c1c1c;">51</span><span class="t" style="left:90.67px;top:310px;font-size:17.6px;letter-spacing:0.18px;color:#1c1c1c;">102</span><span class="t" style="left:209.24px;top:310px;font-size:17.6px;letter-spacing:0.18px;color:#1c1c1c;">70</span><span class="t" style="left:90.67px;top:336px;font-size:17.6px;letter-spacing:0.18px;color:#1c1c1c;">103</span><span class="t" style="left:209.24px;top:336px;font-size:17.6px;letter-spacing:0.18px;color:#1c1c1c;">99</span><span class="t" style="left:90.67px;top:363px;font-size:17.6px;letter-spacing:0.18px;color:#1c1c1c;">104</span><span class="t" style="left:209.24px;top:363px;font-size:17.6px;letter-spacing:0.18px;color:#1c1c1c;">85</span><span class="t" style="left:90.67px;top:389px;font-size:17.6px;letter-spacing:0.18px;color:#1c1c1c;">105</span><span class="t" style="left:209.24px;top:389px;font-size:17.6px;letter-spacing:0.18px;color:#1c1c1c;">93</span><span class="t" style="left:90.67px;top:415px;font-size:17.6px;letter-spacing:0.18px;color:#1c1c1c;">106</span><span class="t" style="left:209.24px;top:415px;font-size:17.6px;letter-spacing:0.18px;color:#1c1c1c;">92</span><span class="t" style="left:90.67px;top:442px;font-size:17.6px;letter-spacing:0.18px;color:#1c1c1c;">107</span><span class="t" style="left:209.24px;top:442px;font-size:17.6px;letter-spacing:0.18px;color:#1c1c1c;">91</span><span class="t" style="left:90.67px;top:468px;font-size:17.6px;letter-spacing:0.18px;color:#1c1c1c;">108</span><span class="t" style="left:209.24px;top:468px;font-size:17.6px;letter-spacing:0.18px;color:#1c1c1c;">92</span><span class="t" style="left:90.67px;top:494px;font-size:17.6px;letter-spacing:0.18px;color:#1c1c1c;">109</span><span class="t" style="left:209.24px;top:494px;font-size:17.6px;letter-spacing:0.18px;color:#1c1c1c;">51</span><span class="t" style="left:91.98px;top:520px;font-size:17.6px;letter-spacing:0.18px;color:#1c1c1c;">110</span><span class="t" style="left:199.27px;top:520px;font-size:17.6px;letter-spacing:0.18px;color:#1c1c1c;">100</span><span class="t" style="left:93.29px;top:547px;font-size:17.6px;letter-spacing:0.18px;color:#1c1c1c;">111</span><span class="t" style="left:209.24px;top:547px;font-size:17.6px;letter-spacing:0.18px;color:#1c1c1c;">69</span><span class="t" style="left:91.98px;top:573px;font-size:17.6px;letter-spacing:0.18px;color:#1c1c1c;">112</span><span class="t" style="left:209.24px;top:573px;font-size:17.6px;letter-spacing:0.18px;color:#1c1c1c;">64</span><span class="t" style="left:91.98px;top:599px;font-size:17.6px;letter-spacing:0.18px;color:#1c1c1c;">113</span><span class="t" style="left:209.24px;top:599px;font-size:17.6px;letter-spacing:0.18px;color:#1c1c1c;">75</span><span class="t" style="left:91.98px;top:626px;font-size:17.6px;letter-spacing:0.18px;color:#1c1c1c;">114</span><span class="t" style="left:209.24px;top:626px;font-size:17.6px;letter-spacing:0.18px;color:#1c1c1c;">63</span><span class="t" style="left:91.98px;top:652px;font-size:17.6px;letter-spacing:0.18px;color:#1c1c1c;">115</span><span class="t" style="left:209.24px;top:652px;font-size:17.6px;letter-spacing:0.18px;color:#1c1c1c;">81</span><span class="t" style="left:91.98px;top:678px;font-size:17.6px;letter-spacing:0.18px;color:#1c1c1c;">116</span><span class="t" style="left:209.24px;top:678px;font-size:17.6px;letter-spacing:0.18px;color:#1c1c1c;">67</span><span class="t" style="left:91.98px;top:705px;font-size:17.6px;letter-spacing:0.18px;color:#1c1c1c;">117</span><span class="t" style="left:209.24px;top:705px;font-size:17.6px;letter-spacing:0.18px;color:#1c1c1c;">65</span><span class="t" style="left:91.98px;top:731px;font-size:17.6px;letter-spacing:0.18px;color:#1c1c1c;">118</span><span class="t" style="left:209.24px;top:731px;font-size:17.6px;letter-spacing:0.18px;color:#1c1c1c;">96</span><span class="t" style="left:91.98px;top:757px;font-size:17.6px;letter-spacing:0.18px;color:#1c1c1c;">119</span><span class="t" style="left:209.24px;top:757px;font-size:17.6px;letter-spacing:0.18px;color:#1c1c1c;">83</span><span class="t" style="left:90.67px;top:783px;font-size:17.6px;letter-spacing:0.18px;color:#1c1c1c;">120</span><span class="t" style="left:209.24px;top:783px;font-size:17.6px;letter-spacing:0.18px;color:#1c1c1c;">99</span><span class="t" style="left:90.67px;top:810px;font-size:17.6px;letter-spacing:0.18px;color:#1c1c1c;">121</span><span class="t" style="left:209.24px;top:810px;font-size:17.6px;letter-spacing:0.18px;color:#1c1c1c;">45</span><span class="t" style="left:90.67px;top:836px;font-size:17.6px;letter-spacing:0.18px;color:#1c1c1c;">122</span><span class="t" style="left:209.24px;top:836px;font-size:17.6px;letter-spacing:0.18px;color:#1c1c1c;">46</span><span class="t" style="left:90.67px;top:862px;font-size:17.6px;letter-spacing:0.18px;color:#1c1c1c;">123</span><span class="t" style="left:209.24px;top:862px;font-size:17.6px;letter-spacing:0.18px;color:#1c1c1c;">77</span><span class="t" style="left:90.67px;top:889px;font-size:17.6px;letter-spacing:0.18px;color:#1c1c1c;">124</span><span class="t" style="left:209.24px;top:889px;font-size:17.6px;letter-spacing:0.18px;color:#1c1c1c;">86</span><span class="t" style="left:325px;top:284px;font-size:17.6px;letter-spacing:0.16px;color:#1c1c1c;">Mean</span><span class="t" style="left:325px;top:310px;font-size:17.6px;letter-spacing:0.07px;color:#1c1c1c;">Std. Deviation</span><span class="t" style="left:325px;top:363px;font-size:17.6px;letter-spacing:0.25px;color:#1c1c1c;">Lower Limit</span><span class="t" style="left:325px;top:389px;font-size:17.6px;letter-spacing:0.22px;color:#1c1c1c;">Upper Limit</span><span class="t" style="left:506.44px;top:284px;font-size:17.6px;letter-spacing:0.18px;color:#1c1c1c;">77</span><span class="t" style="left:506.44px;top:310px;font-size:17.6px;letter-spacing:0.18px;color:#1c1c1c;">17</span><span class="t" style="left:506.44px;top:363px;font-size:17.6px;letter-spacing:0.18px;color:#1c1c1c;">25</span><span class="t" style="left:496.47px;top:389px;font-size:17.6px;letter-spacing:0.18px;color:#1c1c1c;">128</span><span class="t" style="left:681.74px;top:284px;font-size:17.6px;letter-spacing:0.18px;color:#1c1c1c;">25</span><span class="t" style="left:714.63px;top:284px;font-size:17.6px;letter-spacing:0.18px;color:#1c1c1c;">0.000243</span><span class="t" style="left:681.74px;top:310px;font-size:17.6px;letter-spacing:0.18px;color:#1c1c1c;">26</span><span class="t" style="left:714.63px;top:310px;font-size:17.6px;letter-spacing:0.18px;color:#1c1c1c;">0.000289</span><span class="t" style="left:681.74px;top:336px;font-size:17.6px;letter-spacing:0.18px;color:#1c1c1c;">27</span><span class="t" style="left:714.63px;top:336px;font-size:17.6px;letter-spacing:0.18px;color:#1c1c1c;">0.000344</span><span class="t" style="left:681.74px;top:363px;font-size:17.6px;letter-spacing:0.18px;color:#1c1c1c;">28</span><span class="t" style="left:714.63px;top:363px;font-size:17.6px;letter-spacing:0.18px;color:#1c1c1c;">0.000406</span><span class="t" style="left:681.74px;top:389px;font-size:17.6px;letter-spacing:0.18px;color:#1c1c1c;">29</span><span class="t" style="left:714.63px;top:389px;font-size:17.6px;letter-spacing:0.18px;color:#1c1c1c;">0.000479</span><span class="t" style="left:681.74px;top:415px;font-size:17.6px;letter-spacing:0.18px;color:#1c1c1c;">30</span><span class="t" style="left:714.63px;top:415px;font-size:17.6px;letter-spacing:0.18px;color:#1c1c1c;">0.000563</span><span class="t" style="left:681.74px;top:442px;font-size:17.6px;letter-spacing:0.18px;color:#1c1c1c;">31</span><span class="t" style="left:714.63px;top:442px;font-size:17.6px;letter-spacing:0.18px;color:#1c1c1c;">0.000659</span><span class="t" style="left:681.74px;top:468px;font-size:17.6px;letter-spacing:0.18px;color:#1c1c1c;">32</span><span class="t" style="left:724.6px;top:468px;font-size:17.6px;letter-spacing:0.18px;color:#1c1c1c;">0.00077</span><span class="t" style="left:681.74px;top:494px;font-size:17.6px;letter-spacing:0.18px;color:#1c1c1c;">33</span><span class="t" style="left:714.63px;top:494px;font-size:17.6px;letter-spacing:0.18px;color:#1c1c1c;">0.000896</span><span class="t" style="left:681.74px;top:520px;font-size:17.6px;letter-spacing:0.18px;color:#1c1c1c;">34</span><span class="t" style="left:714.63px;top:520px;font-size:17.6px;letter-spacing:0.18px;color:#1c1c1c;">0.001039</span><span class="t" style="left:681.74px;top:547px;font-size:17.6px;letter-spacing:0.18px;color:#1c1c1c;">35</span><span class="t" style="left:714.63px;top:547px;font-size:17.6px;letter-spacing:0.18px;color:#1c1c1c;">0.001201</span><span class="t" style="left:681.74px;top:573px;font-size:17.6px;letter-spacing:0.18px;color:#1c1c1c;">36</span><span class="t" style="left:724.6px;top:573px;font-size:17.6px;letter-spacing:0.18px;color:#1c1c1c;">0.00138</span><span class="t" style="left:681.74px;top:599px;font-size:17.6px;letter-spacing:0.18px;color:#1c1c1c;">37</span><span class="t" style="left:714.63px;top:599px;font-size:17.6px;letter-spacing:0.18px;color:#1c1c1c;">0.001589</span><span class="t" style="left:681.74px;top:626px;font-size:17.6px;letter-spacing:0.18px;color:#1c1c1c;">38</span><span class="t" style="left:734.57px;top:626px;font-size:17.6px;letter-spacing:0.18px;color:#1c1c1c;">0.0018</span><span class="t" style="left:681.74px;top:652px;font-size:17.6px;letter-spacing:0.18px;color:#1c1c1c;">39</span><span class="t" style="left:714.63px;top:652px;font-size:17.6px;letter-spacing:0.18px;color:#1c1c1c;">0.002064</span><span class="t" style="left:681.74px;top:678px;font-size:17.6px;letter-spacing:0.18px;color:#1c1c1c;">40</span><span class="t" style="left:714.63px;top:678px;font-size:17.6px;letter-spacing:0.18px;color:#1c1c1c;">0.002339</span><span class="t" style="left:681.74px;top:705px;font-size:17.6px;letter-spacing:0.18px;color:#1c1c1c;">41</span><span class="t" style="left:724.6px;top:705px;font-size:17.6px;letter-spacing:0.18px;color:#1c1c1c;">0.00264</span><span class="t" style="left:681.74px;top:731px;font-size:17.6px;letter-spacing:0.18px;color:#1c1c1c;">42</span><span class="t" style="left:714.63px;top:731px;font-size:17.6px;letter-spacing:0.18px;color:#1c1c1c;">0.002969</span><span class="t" style="left:681.74px;top:757px;font-size:17.6px;letter-spacing:0.18px;color:#1c1c1c;">43</span><span class="t" style="left:714.63px;top:757px;font-size:17.6px;letter-spacing:0.18px;color:#1c1c1c;">0.003327</span><span class="t" style="left:681.74px;top:783px;font-size:17.6px;letter-spacing:0.18px;color:#1c1c1c;">44</span><span class="t" style="left:714.63px;top:783px;font-size:17.6px;letter-spacing:0.18px;color:#1c1c1c;">0.003714</span><span class="t" style="left:681.74px;top:810px;font-size:17.6px;letter-spacing:0.18px;color:#1c1c1c;">45</span><span class="t" style="left:734.57px;top:810px;font-size:17.6px;letter-spacing:0.18px;color:#1c1c1c;">0.0041</span><span class="t" style="left:681.74px;top:836px;font-size:17.6px;letter-spacing:0.18px;color:#1c1c1c;">46</span><span class="t" style="left:714.63px;top:836px;font-size:17.6px;letter-spacing:0.18px;color:#1c1c1c;">0.004672</span><span class="t" style="left:681.74px;top:862px;font-size:17.6px;letter-spacing:0.18px;color:#1c1c1c;">47</span><span class="t" style="left:724.6px;top:862px;font-size:17.6px;letter-spacing:0.18px;color:#1c1c1c;">0.00518</span><span class="t" style="left:681.74px;top:889px;font-size:17.6px;letter-spacing:0.18px;color:#1c1c1c;">48</span><span class="t" style="left:714.63px;top:889px;font-size:17.6px;letter-spacing:0.18px;color:#1c1c1c;">0.005723</span><span class="t" style="left:681.74px;top:915px;font-size:17.6px;letter-spacing:0.18px;color:#1c1c1c;">49</span><span class="t" style="left:714.63px;top:915px;font-size:17.6px;letter-spacing:0.18px;color:#1c1c1c;">0.006302</span><span class="t" style="left:681.74px;top:941px;font-size:17.6px;letter-spacing:0.18px;color:#1c1c1c;">50</span><span class="t" style="left:714.63px;top:941px;font-size:17.6px;letter-spacing:0.18px;color:#1c1c1c;">0.006915</span><span class="t" style="left:681.74px;top:967px;font-size:17.6px;letter-spacing:0.18px;color:#1c1c1c;">51</span><span class="t" style="left:714.63px;top:967px;font-size:17.6px;letter-spacing:0.18px;color:#1c1c1c;">0.007563</span>
</div>
<div id="chart"><svg width="1536" height="980" viewBox="0 0 1536 980"><rect x="728.0" y="434.9" width="657.5999999999999" height="394.5" fill="#fff"/><rect x="790.13" y="501.9" width="1.15" height="283.3" fill="#d9d9d9"/><rect x="869.93" y="501.9" width="1.15" height="283.3" fill="#d9d9d9"/><rect x="950.93" y="501.9" width="1.15" height="283.3" fill="#d9d9d9"/><rect x="1031.13" y="501.9" width="1.15" height="283.3" fill="#d9d9d9"/><rect x="1110.93" y="501.9" width="1.15" height="283.3" fill="#d9d9d9"/><rect x="1190.83" y="501.9" width="1.15" height="283.3" fill="#d9d9d9"/><rect x="1270.83" y="501.9" width="1.15" height="283.3" fill="#d9d9d9"/><rect x="1351.03" y="501.9" width="1.15" height="283.3" fill="#d9d9d9"/><rect x="790.7" y="784.63" width="560.9" height="1.15" fill="#d9d9d9"/><rect x="790.7" y="727.97" width="560.9" height="1.15" fill="#d9d9d9"/><rect x="790.7" y="671.31" width="560.9" height="1.15" fill="#d9d9d9"/><rect x="790.7" y="614.65" width="560.9" height="1.15" fill="#d9d9d9"/><rect x="790.7" y="557.99" width="560.9" height="1.15" fill="#d9d9d9"/><rect x="790.7" y="501.33" width="560.9" height="1.15" fill="#d9d9d9"/><path d="M890.86 782.49 L892.86 782.24 L894.87 781.97 L896.87 781.68 L898.87 781.36 L900.88 781.02 L902.88 780.66 L904.88 780.26 L906.89 779.84 L908.89 779.39 L910.89 778.9 L912.9 778.38 L914.9 777.82 L916.9 777.22 L918.91 776.58 L920.91 775.9 L922.91 775.17 L924.92 774.4 L926.92 773.57 L928.92 772.69 L930.92 771.76 L932.93 770.77 L934.93 769.72 L936.93 768.61 L938.94 767.44 L940.94 766.19 L942.94 764.88 L944.95 763.5 L946.95 762.04 L948.95 760.5 L950.96 758.89 L952.96 757.19 L954.96 755.41 L956.97 753.54 L958.97 751.59 L960.97 749.55 L962.98 747.41 L964.98 745.18 L966.98 742.86 L968.99 740.43 L970.99 737.91 L972.99 735.29 L975 732.58 L977 729.76 L979 726.84 L981.01 723.81 L983.01 720.69 L985.01 717.47 L987.01 714.15 L989.02 710.72 L991.02 707.2 L993.02 703.58 L995.03 699.87 L997.03 696.07 L999.03 692.17 L1001.04 688.19 L1003.04 684.13 L1005.04 679.98 L1007.05 675.76 L1009.05 671.47 L1011.05 667.11 L1013.06 662.69 L1015.06 658.21 L1017.06 653.68 L1019.07 649.1 L1021.07 644.49 L1023.07 639.84 L1025.08 635.17 L1027.08 630.49 L1029.08 625.79 L1031.09 621.09 L1033.09 616.4 L1035.09 611.72 L1037.1 607.06 L1039.1 602.44 L1041.1 597.86 L1043.11 593.32 L1045.11 588.85 L1047.11 584.44 L1049.11 580.11 L1051.12 575.87 L1053.12 571.72 L1055.12 567.68 L1057.13 563.74 L1059.13 559.94 L1061.13 556.26 L1063.14 552.72 L1065.14 549.33 L1067.14 546.09 L1069.15 543.02 L1071.15 540.12 L1073.15 537.39 L1075.16 534.85 L1077.16 532.5 L1079.16 530.35 L1081.17 528.4 L1083.17 526.65 L1085.17 525.12 L1087.18 523.8 L1089.18 522.7 L1091.18 521.82 L1093.19 521.17 L1095.19 520.74 L1097.19 520.53 L1099.19 520.56 L1101.2 520.81 L1103.2 521.28 L1105.2 521.98 L1107.21 522.9 L1109.21 524.05 L1111.21 525.41 L1113.22 526.99 L1115.22 528.77 L1117.22 530.76 L1119.23 532.96 L1121.23 535.34 L1123.23 537.92 L1125.24 540.68 L1127.24 543.62 L1129.24 546.73 L1131.25 549.99 L1133.25 553.41 L1135.25 556.98 L1137.26 560.69 L1139.26 564.52 L1141.26 568.48 L1143.27 572.54 L1145.27 576.71 L1147.27 580.97 L1149.28 585.32 L1151.28 589.74 L1153.28 594.23 L1155.28 598.77 L1157.29 603.36 L1159.29 607.99 L1161.29 612.65 L1163.3 617.33 L1165.3 622.03 L1167.3 626.73 L1169.31 631.42 L1171.31 636.11 L1173.31 640.77 L1175.32 645.41 L1177.32 650.02 L1179.32 654.59 L1181.33 659.11 L1183.33 663.57 L1185.33 667.99 L1187.34 672.33 L1189.34 676.61 L1191.34 680.82 L1193.35 684.95 L1195.35 689 L1197.35 692.96 L1199.36 696.84 L1201.36 700.62 L1203.36 704.32 L1205.37 707.91 L1207.37 711.41 L1209.37 714.82 L1211.38 718.12 L1213.38 721.32 L1215.38 724.43 L1217.38 727.43 L1219.39 730.33 L1221.39 733.13 L1223.39 735.83 L1225.4 738.43 L1227.4 740.93 L1229.4 743.33 L1231.41 745.63 L1233.41 747.84 L1235.41 749.96 L1237.42 751.99 L1239.42 753.92 L1241.42 755.77 L1243.43 757.54 L1245.43 759.22 L1247.43 760.82 L1249.44 762.34 L1251.44 763.78 L1253.44 765.15 L1255.45 766.45 L1257.45 767.68 L1259.45 768.84 L1261.46 769.94 L1263.46 770.97 L1265.46 771.95 L1267.46 772.87 L1269.47 773.74 L1271.47 774.55 L1273.47 775.32 L1275.48 776.04 L1277.48 776.71 L1279.48 777.34 L1281.49 777.93 L1283.49 778.48 L1285.49 779 L1287.5 779.48 L1289.5 779.93 L1291.5 780.34 L1293.51 780.73 L1295.51 781.09 L1297.51 781.43 L1299.52 781.74 L1301.52 782.02 L1303.52 782.29" fill="none" stroke="#4472c4" stroke-width="2.25" stroke-linecap="round" stroke-linejoin="round"/><rect x="728.0" y="434.9" width="657.5999999999999" height="394.5" fill="none" stroke="#7c7c7c" stroke-width="1.7"/><circle cx="728.6" cy="435.4" r="6.3" fill="#fff" stroke="#6e6e6e" stroke-width="2.5"/><circle cx="728.6" cy="632.65" r="6.3" fill="#fff" stroke="#6e6e6e" stroke-width="2.5"/><circle cx="728.6" cy="829.9" r="6.3" fill="#fff" stroke="#6e6e6e" stroke-width="2.5"/><circle cx="1057.4" cy="435.4" r="6.3" fill="#fff" stroke="#6e6e6e" stroke-width="2.5"/><circle cx="1057.4" cy="829.9" r="6.3" fill="#fff" stroke="#6e6e6e" stroke-width="2.5"/><circle cx="1386.2" cy="435.4" r="6.3" fill="#fff" stroke="#6e6e6e" stroke-width="2.5"/><circle cx="1386.2" cy="632.65" r="6.3" fill="#fff" stroke="#6e6e6e" stroke-width="2.5"/><circle cx="1386.2" cy="829.9" r="6.3" fill="#fff" stroke="#6e6e6e" stroke-width="2.5"/></svg>
<span class="t" style="left:786.64px;top:800px;font-size:14.6px;color:#595959;">0</span><span class="t" style="left:862.38px;top:800px;font-size:14.6px;color:#595959;">20</span><span class="t" style="left:943.38px;top:800px;font-size:14.6px;color:#595959;">40</span><span class="t" style="left:1023.58px;top:800px;font-size:14.6px;color:#595959;">60</span><span class="t" style="left:1103.38px;top:800px;font-size:14.6px;color:#595959;">80</span><span class="t" style="left:1179.22px;top:800px;font-size:14.6px;color:#595959;">100</span><span class="t" style="left:1259.22px;top:800px;font-size:14.6px;color:#595959;">120</span><span class="t" style="left:1339.42px;top:800px;font-size:14.6px;color:#595959;">140</span><span class="t" style="left:767.48px;top:778px;font-size:14.6px;color:#595959;">0</span><span class="t" style="left:739.06px;top:722px;font-size:14.6px;color:#595959;">0.005</span><span class="t" style="left:747.18px;top:665px;font-size:14.6px;color:#595959;">0.01</span><span class="t" style="left:739.06px;top:608px;font-size:14.6px;color:#595959;">0.015</span><span class="t" style="left:747.18px;top:552px;font-size:14.6px;color:#595959;">0.02</span><span class="t" style="left:739.06px;top:495px;font-size:14.6px;color:#595959;">0.025</span><span class="t" style="left:1001.3px;top:453px;font-size:23px;color:#595959;-webkit-text-stroke:0.35px;">Chart Title</span>
</div>
<div id="dd"><svg width="1536" height="980" viewBox="0 0 1536 980"><rect x="1010.7" y="133.7" width="236.70000000000005" height="382.3" fill="#fff" stroke="#c8c6c4" stroke-width="1.2"/><rect x="1165.8" y="176.3" width="76.5" height="76.1" fill="#e1dfdd"/><rect x="1012.5" y="340.8" width="233" height="1.2" fill="#e1dfdd"/><rect x="1012.5" y="472.4" width="233" height="1.2" fill="#e1dfdd"/><path d="M1028.5 191.2 L1028.5 236.6 L1073.8 236.6" fill="none" stroke="#4a4a4a" stroke-width="2.0"/><circle cx="1049" cy="211" r="5" fill="#3b3a39"/><circle cx="1062.2" cy="227.3" r="5" fill="#3b3a39"/><circle cx="1039.3" cy="197.8" r="3.7" fill="#fff" stroke="#2a92df" stroke-width="2.2"/><circle cx="1065.6" cy="205.9" r="3.7" fill="#fff" stroke="#2a92df" stroke-width="2.2"/><circle cx="1040.8" cy="223.8" r="3.7" fill="#fff" stroke="#2a92df" stroke-width="2.2"/><path d="M1103.9 190.5 L1103.9 237.6 L1151.5 237.6" fill="none" stroke="#4a4a4a" stroke-width="2.0"/><path d="M1112.8 232.4 C1116 222 1120 212 1124.4 208.5 C1131 203.5 1141 205 1144.5 214 C1146 219 1146.4 226 1146.5 232.4" fill="none" stroke="#4a4a4a" stroke-width="1.2"/><path d="M1109.1 199 C1112 212 1120 224 1132 226.1 C1140 225.5 1143.8 216 1143.6 206 L1143.1 194.7" fill="none" stroke="#2a92df" stroke-width="1.4"/><circle cx="1124.4" cy="208.5" r="3.2" fill="#3b3a39"/><circle cx="1146.5" cy="232.4" r="3" fill="#3b3a39"/><circle cx="1112.8" cy="232.4" r="3" fill="#3b3a39"/><circle cx="1109.1" cy="199" r="2.6" fill="#fff" stroke="#2a92df" stroke-width="1.5"/><circle cx="1143.1" cy="194.7" r="2.6" fill="#fff" stroke="#2a92df" stroke-width="1.5"/><circle cx="1132" cy="226.1" r="2.6" fill="#fff" stroke="#2a92df" stroke-width="1.5"/><path d="M1180.5 190.2 L1180.5 237.6 L1228.1 237.6" fill="none" stroke="#4a4a4a" stroke-width="1.5"/><path d="M1184.7 198.7 C1190 215 1197 226.4 1207.2 226.4 C1219 226.4 1222.5 212 1220.7 193.2" fill="none" stroke="#3b3a39" stroke-width="1.3"/><path d="M1190.4 232.4 C1194 216 1200 206.2 1210.2 206.2 C1219 206.2 1223 220 1223.7 232.4" fill="none" stroke="#2a92df" stroke-width="1.3"/><path d="M1027.3 267.1 L1027.3 314.4 L1074.9 314.4" fill="none" stroke="#4a4a4a" stroke-width="2.0"/><path d="M1033.3 272.5 L1045.8 299.8 L1067.4 272.5 L1056.25 304" fill="none" stroke="#2a92df" stroke-width="1.3"/><path d="M1038.75 306.4 L1049.7 284.5 L1071 310.7 L1068.4 294.2" fill="none" stroke="#3b3a39" stroke-width="1.3"/><circle cx="1038.75" cy="306.4" r="3.2" fill="#3b3a39"/><circle cx="1049.7" cy="284.5" r="3.2" fill="#3b3a39"/><circle cx="1068.4" cy="294.2" r="3.2" fill="#3b3a39"/><circle cx="1033.3" cy="272.5" r="2.6" fill="#fff" stroke="#2a92df" stroke-width="1.4"/><circle cx="1067.4" cy="272.5" r="2.6" fill="#fff" stroke="#2a92df" stroke-width="1.4"/><circle cx="1056.25" cy="304" r="2.6" fill="#fff" stroke="#2a92df" stroke-width="1.4"/><path d="M1103.9 267.1 L1103.9 314.4 L1151.8 314.4" fill="none" stroke="#4a4a4a" stroke-width="2.0"/><path d="M1108.5 271.7 L1122.6 300.4 L1144.5 272.7 L1139 303.5" fill="none" stroke="#2a92df" stroke-width="1.4"/><path d="M1113.2 308.1 L1126.5 285.8 L1147.9 310.7 L1145.8 294.6" fill="none" stroke="#3b3a39" stroke-width="1.4"/><path d="M1027.3 398.3 L1027.3 446 L1074.9 446" fill="none" stroke="#797775" stroke-width="2.0"/><circle cx="1046.4" cy="410.3" r="8.8" fill="#3b3a39"/><circle cx="1062.7" cy="420.2" r="5.4" fill="#3b3a39"/><circle cx="1041.6" cy="429.4" r="7.7" fill="#83beec" stroke="#1e7ed0" stroke-width="1.6"/><circle cx="1059" cy="435" r="6.5" fill="#83beec" stroke="#1e7ed0" stroke-width="1.6"/><defs><radialGradient id="sd" cx="0.36" cy="0.28" r="0.78"><stop offset="0" stop-color="#fff"/><stop offset="0.12" stop-color="#f2f2f2"/><stop offset="0.36" stop-color="#8a8886"/><stop offset="0.62" stop-color="#3e3d3c"/><stop offset="1" stop-color="#323130"/></radialGradient><radialGradient id="sl" cx="0.36" cy="0.28" r="0.8"><stop offset="0" stop-color="#fff"/><stop offset="0.2" stop-color="#f7f7f7"/><stop offset="0.55" stop-color="#b3b1ae"/><stop offset="0.85" stop-color="#83817e"/><stop offset="1" stop-color="#777572"/></radialGradient></defs><path d="M1103.9 398.3 L1103.9 446 L1151.8 446" fill="none" stroke="#797775" stroke-width="2.0"/><circle cx="1121.9" cy="411.4" r="8.8" fill="url(#sd)"/><circle cx="1138.4" cy="421" r="5.4" fill="url(#sd)"/><circle cx="1116.9" cy="430.4" r="8.2" fill="url(#sl)"/><circle cx="1134.6" cy="435.8" r="7.1" fill="url(#sl)"/><path d="M1028.3 482 L1028.3 502.8 L1049.8 502.8" fill="none" stroke="#4a4a4a" stroke-width="1.7"/><circle cx="1036" cy="487.1" r="2.9" fill="#333"/><circle cx="1045.7" cy="488.3" r="2.9" fill="#333"/><circle cx="1044.4" cy="496.6" r="2.9" fill="#333"/><circle cx="1034.6" cy="495.3" r="2.2" fill="#fff" stroke="#2a92df" stroke-width="1.5"/><rect x="1062" y="501.7" width="14" height="1.2" fill="#323130"/></svg>
<span class="t" style="left:1031.2px;top:148px;font-size:16.3px;letter-spacing:-0.24px;color:#201f1e;font-weight:bold;">Scatter</span><span class="t" style="left:1031.5px;top:355px;font-size:16.3px;letter-spacing:-0.35px;color:#201f1e;font-weight:bold;">Bubble</span><span class="t" style="left:1062.1px;top:486px;font-size:16.3px;letter-spacing:-0.38px;color:#323130;">More Scatter Charts...</span>
</div>
<div id="tip"><div class="tip" style="left:1212px;top:262px;width:289px;height:226px"></div><span class="t" style="left:1227.6px;top:275px;font-size:16px;letter-spacing:-0.04px;color:#4c4c4c;font-weight:bold;">Scatter with Smooth Lines</span><span class="t" style="left:1227.6px;top:303px;font-size:16.2px;letter-spacing:-0.05px;color:#606060;">Use this chart type to:</span><span class="t" style="left:1227.6px;top:325px;font-size:16.2px;letter-spacing:0.08px;color:#606060;">• Compare at least two sets of</span><span class="t" style="left:1227.6px;top:347px;font-size:16.2px;letter-spacing:0px;color:#606060;">values or pairs of data.</span><span class="t" style="left:1227.6px;top:391px;font-size:16.2px;letter-spacing:-0.25px;color:#606060;">Use it when:</span><span class="t" style="left:1227.6px;top:413px;font-size:16.2px;letter-spacing:0.03px;color:#606060;">• There are many data points</span><span class="t" style="left:1227.6px;top:435px;font-size:16.2px;letter-spacing:-0.1px;color:#606060;">• The data represents a set of x,y</span><span class="t" style="left:1227.6px;top:456px;font-size:16.2px;letter-spacing:0.04px;color:#606060;">pairs based on a formula.</span></div>
<svg id="arrow" width="1536" height="980" viewBox="0 0 1536 980"><path d="M1037.3 211.2 L1112 211.2 L1112 197.31 A5 5 0 0 1 1119.56 193.01 L1159.1 216.61 A5 5 0 0 1 1159.1 225.19 L1119.56 248.79 A5 5 0 0 1 1112 244.49 L1112 230.6 L1037.3 230.6 A9.7 9.7 0 0 1 1037.3 211.2 Z M1040 215.7 L1119.3 215.7 L1119.3 201.4 L1152.1 220.9 L1119.3 240.4 L1119.3 226.1 L1040 226.1 A5.2 5.2 0 0 1 1040 215.7 Z" fill="#c00000" fill-rule="evenodd"/></svg>
</body></html>
